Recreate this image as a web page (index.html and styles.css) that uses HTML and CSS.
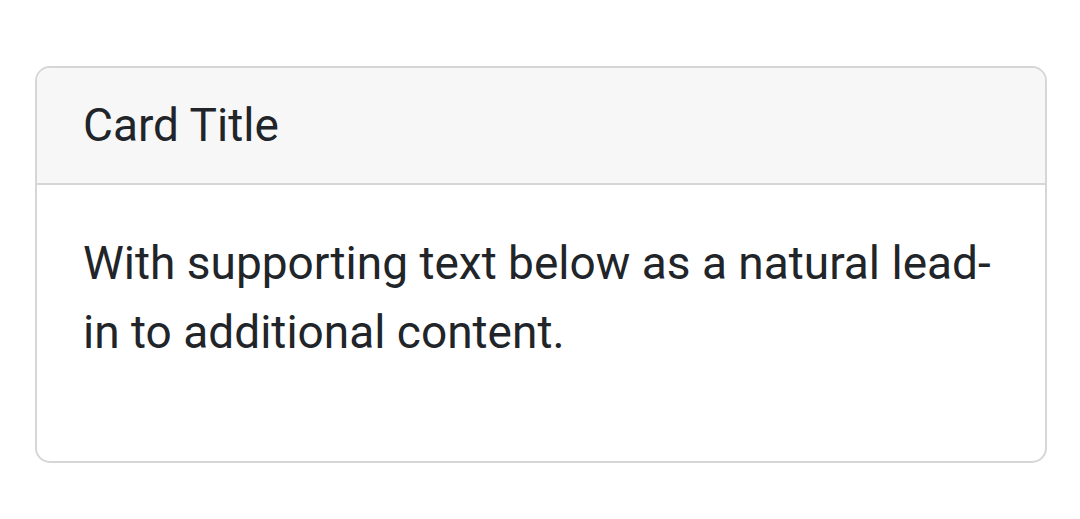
FILE: index.html
```html
<!DOCTYPE html>
<html lang="en">
<head>
    <meta charset="UTF-8">
    <meta name="viewport" content="width=device-width, initial-scale=1.0">
    <title>Card</title>
    <link rel="stylesheet" href="styles.css">
</head>
<body>
    <div class="card">
        <div class="card-header">Card Title</div>
        <div class="card-body">
            <p class="card-text">With supporting text below as a natural lead-in to additional content.</p>
        </div>
    </div>
</body>
</html>
```

FILE: styles.css
```css
body {
    margin: 0;
    padding: 66px 33px 0 35px;
    font-family: Roboto, "Noto Sans", sans-serif;
    font-size: 46px;
    line-height: 1.5;
    color: #212529;
    background: #fff;
}

.card {
    border: 2px solid #d6d6d6;
    border-radius: 15px;
    overflow: hidden;
    background: #fff;
}

.card-header {
    background: #f7f7f7;
    padding: 23px 46px;
    border-bottom: 2px solid #d6d6d6;
}

.card-body {
    padding: 44px 46px 48px;
}

.card-text {
    margin: 0 0 46px;
}
```
